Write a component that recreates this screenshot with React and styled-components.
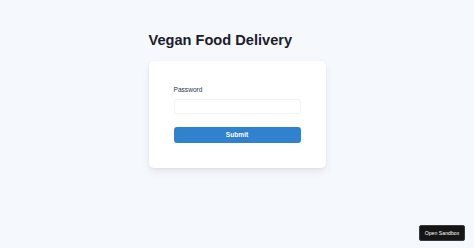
import styled, { createGlobalStyle } from 'styled-components';

const GlobalStyle = createGlobalStyle`
  html, body {
    margin: 0;
    padding: 0;
  }
  body {
    background: #f5f8fc;
    font-family: 'Liberation Sans', Arial, sans-serif;
  }
`;

function App() {
  return (
    <>
      <GlobalStyle />
      <Page>
        <Container>
          <Title>Vegan Food Delivery</Title>
          <Card>
            <Form onSubmit={(e) => e.preventDefault()}>
              <Field>
                <Label htmlFor="password">Password</Label>
                <Input id="password" type="password" />
              </Field>
              <SubmitButton type="submit">Submit</SubmitButton>
            </Form>
          </Card>
        </Container>
        <SandboxButton>Open Sandbox</SandboxButton>
      </Page>
    </>
  );
}

const Page = styled.div`
  width: 100%;
  height: 100vh;
  box-sizing: border-box;
  display: flex;
  justify-content: center;
  padding-top: 32px;
  background: #f5f8fc;
`;
const Container = styled.div`
  width: 177px;
  display: flex;
  flex-direction: column;
`;
const Title = styled.h1`
  margin: 0 0 12px;
  color: #1a202c;
  font-size: 14.6px;
  font-weight: 700;
  line-height: 17px;
`;
const Card = styled.div`
  background: #fff;
  border-radius: 5px;
  padding: 24px 25px 25px;
  box-shadow: 0 4px 8px rgba(0, 0, 0, 0.07), 0 1px 3px rgba(0, 0, 0, 0.05);
`;
const Form = styled.form`
  display: flex;
  flex-direction: column;
  gap: 13px;
`;
const Field = styled.div`
  display: flex;
  flex-direction: column;
  gap: 4px;
`;
const Label = styled.label`
  color: #2d3748;
  font-size: 6.6px;
  line-height: 10px;
`;
const Input = styled.input`
  height: 15px;
  box-sizing: border-box;
  border: 0.5px solid #f1f3f6;
  border-radius: 3px;
  background: #fff;
  padding: 0 6px;
  outline: none;
`;
const SubmitButton = styled.button`
  height: 15.5px;
  border: none;
  border-radius: 3px;
  background: #3182ce;
  color: #fff;
  font-family: 'Liberation Sans', Arial, sans-serif;
  font-size: 6.6px;
  font-weight: 700;
  cursor: pointer;
  padding: 0;
`;
const SandboxButton = styled.div`
  position: fixed;
  right: 9px;
  bottom: 7px;
  width: 44px;
  height: 14px;
  display: flex;
  align-items: center;
  justify-content: center;
  background: #151515;
  border: 0.5px solid #3a3a3a;
  border-radius: 2px;
  color: #fff;
  font-size: 5.2px;
`;

export default App;
